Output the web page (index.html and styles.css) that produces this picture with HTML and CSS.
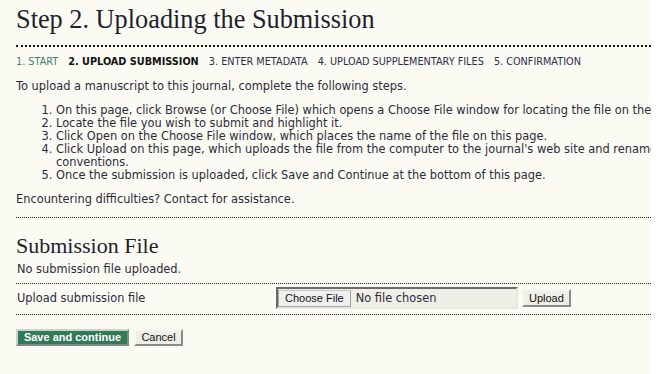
FILE: index.html
```html
<!DOCTYPE html>
<html>
<head>
<meta charset="utf-8">
<link rel="stylesheet" href="styles.css">
</head>
<body>
<div class="page">
  <h2 class="title">Step 2. Uploading the Submission</h2>
  <div class="steps">
    <span class="step done">1. START</span>
    <span class="step current">2. UPLOAD SUBMISSION</span>
    <span class="step">3. ENTER METADATA</span>
    <span class="step">4. UPLOAD SUPPLEMENTARY FILES</span>
    <span class="step">5. CONFIRMATION</span>
  </div>
  <p class="intro">To upload a manuscript to this journal, complete the following steps.</p>
  <ol class="instructions">
    <li>On this page, click Browse (or Choose File) which opens a Choose File window for locating the file on the hard drive of your computer.</li>
    <li>Locate the file you wish to submit and highlight it.</li>
    <li>Click Open on the Choose File window, which places the name of the file on this page.</li>
    <li>Click Upload on this page, which uploads the file from the computer to the journal's web site and renames it following the journal's<br>conventions.</li>
    <li>Once the submission is uploaded, click Save and Continue at the bottom of this page.</li>
  </ol>
  <p class="help">Encountering difficulties? Contact for assistance.</p>
  <div class="separator"></div>
  <h3 class="section-title">Submission File</h3>
  <p class="status">No submission file uploaded.</p>
  <div class="row-line"></div>
  <div class="upload-row">
    <div class="label">Upload submission file</div>
    <div class="controls">
      <div class="file-input">
        <span class="choose">Choose File</span>
        <span class="chosen">No file chosen</span>
      </div>
      <span class="btn upload">Upload</span>
    </div>
  </div>
  <div class="row-line"></div>
  <div class="actions">
    <span class="btn primary">Save and continue</span>
    <span class="btn cancel">Cancel</span>
  </div>
</div>
</body>
</html>
```

FILE: styles.css
```css
html, body {
  margin: 0;
  padding: 0;
  background: #ffffff;
  height: 100%;
}

.page {
  width: 635px;
  height: 374px;
  padding-left: 16px;
  background: #fbfbf3;
  overflow: hidden;
  font-family: "DejaVu Sans", Verdana, sans-serif;
  font-size: 11.4px;
  color: #2b2b3b;
}

.title {
  margin: 0;
  padding-top: 5px;
  height: 40px;
  font-family: "Liberation Serif", Georgia, serif;
  font-weight: normal;
  font-size: 26.3px;
  line-height: 30px;
  color: #1f1f2f;
  border-bottom: 2px dotted #111;
  box-sizing: content-box;
  white-space: nowrap;
}

.steps {
  margin-top: 8px;
  font-size: 9.7px;
  line-height: 13px;
  white-space: nowrap;
  color: #2b2b4b;
}

.step {
  margin-right: 7px;
}

.step.done {
  color: #3f8070;
}

.step.current {
  font-weight: bold;
  color: #111;
}

.intro {
  margin: 12px 0 0;
  line-height: 13px;
  white-space: nowrap;
}

.instructions {
  margin: 11px 0 0;
  padding-left: 40px;
  line-height: 13px;
}

.instructions li {
  white-space: nowrap;
}

.help {
  margin: 11px 0 0;
  line-height: 13px;
}

.separator {
  margin-top: 11px;
  border-top: 1px dotted #222;
}

.section-title {
  margin: 17px 0 0;
  font-family: "Liberation Serif", Georgia, serif;
  font-weight: normal;
  font-size: 22px;
  line-height: 22px;
  color: #1f1f2f;
}

.status {
  margin: 6px 0 0;
  line-height: 13px;
  padding-left: 1px;
}

.row-line {
  margin-top: 7px;
  border-top: 1px dotted #222;
}

.upload-row {
  display: flex;
  align-items: center;
  height: 26px;
  padding-top: 1px;
}

.upload-row + .row-line {
  margin-top: 3px;
}

.label {
  width: 259px;
  padding-left: 1px;
}

.controls {
  display: flex;
  align-items: center;
  gap: 4px;
}

.file-input {
  display: flex;
  align-items: center;
  width: 238px;
  height: 18px;
  background: #efefe7;
  border-top: 2px solid #6a6a6a;
  border-left: 2px solid #6a6a6a;
  border-right: 2px solid #e8e8e0;
  border-bottom: 2px solid #e8e8e0;
}

.choose {
  display: inline-block;
  height: 17px;
  line-height: 15px;
  padding: 0 6px;
  background: #efefef;
  border: 1px solid #a5a5a5;
  border-top-color: #c5c5c5;
  font-family: "Liberation Sans", Arial, sans-serif;
  font-size: 11px;
  color: #111;
  box-sizing: border-box;
}

.chosen {
  margin-left: 5px;
  color: #2b2b3b;
}

.btn {
  display: inline-block;
  font-family: "Liberation Sans", Arial, sans-serif;
  font-size: 11px;
  box-sizing: border-box;
}

.upload {
  height: 18px;
  line-height: 14px;
  padding: 0 5px;
  background: #efefe7;
  color: #111;
  border-top: 2px solid #f6f6f0;
  border-left: 2px solid #f6f6f0;
  border-right: 2px solid #8a8a8a;
  border-bottom: 2px solid #8a8a8a;
}

.actions {
  display: flex;
  gap: 5px;
  margin-top: 14px;
}

.primary {
  width: 113px;
  height: 17px;
  line-height: 13px;
  text-align: center;
  background: #2f7b57;
  color: #ffffff;
  font-weight: bold;
  border-top: 2px solid #c9d4cc;
  border-left: 2px solid #c9d4cc;
  border-right: 2px solid #7e8a84;
  border-bottom: 2px solid #7e8a84;
}

.cancel {
  width: 49px;
  height: 17px;
  line-height: 13px;
  text-align: center;
  background: #efefe7;
  color: #111;
  border-top: 2px solid #f6f6f0;
  border-left: 2px solid #f6f6f0;
  border-right: 2px solid #8a8a8a;
  border-bottom: 2px solid #8a8a8a;
}
```
